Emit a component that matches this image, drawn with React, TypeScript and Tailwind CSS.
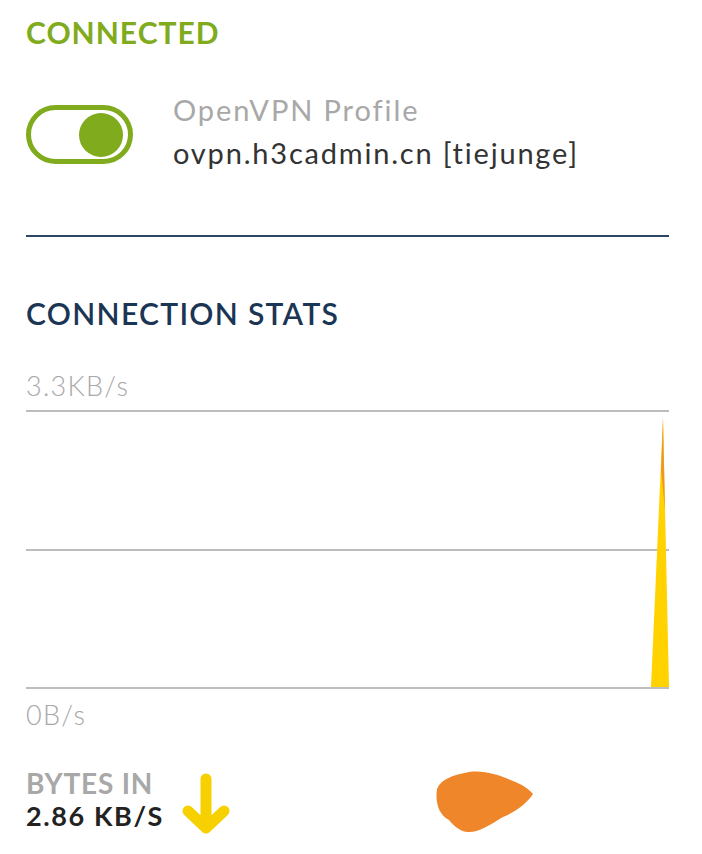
import React from "react";

export default function App() {
  const font = { fontFamily: "Lato, 'Open Sans', sans-serif" };
  return (
    <div className="w-[702px] h-[854px] bg-white overflow-hidden pl-[26px] pr-[33px]" style={font}>
      <div className="pt-[14px] text-[30px] leading-[36px] font-bold text-[#7fab1d] tracking-[1px]">CONNECTED</div>
      <div className="flex items-start mt-[55px]">
        <div className="w-[107px] h-[59px] rounded-full border-[5px] border-[#7fab1d] flex items-center justify-end pr-[5px] shrink-0">
          <div className="w-[44px] h-[44px] rounded-full bg-[#7fab1d]" />
        </div>
        <div className="ml-[40px] -mt-[17px]">
          <div className="text-[29px] leading-[44px] text-[#a8a8a8] tracking-[1.9px]">OpenVPN Profile</div>
          <div className="text-[29px] leading-[42px] text-[#333] tracking-[1.8px]">ovpn.h3cadmin.cn [tiejunge]</div>
        </div>
      </div>
      <div className="mt-[61px] h-[2px] bg-[#2b4763]" />
      <div className="mt-[58px] text-[30px] leading-[36px] font-semibold text-[#1b3554] tracking-[1.3px]">CONNECTION STATS</div>
      <div className="mt-[40px] text-[27px] leading-[30px] font-light text-[#a8a8a8] tracking-[1.3px]">3.3KB/s</div>
      <div className="relative mt-[9px] h-[279px] flex flex-col">
        <div className="h-[2px] bg-[#bdbdbd]" />
        <div className="flex-1" />
        <div className="h-[2px] bg-[#bdbdbd]" />
        <div className="flex-1" />
        <div className="h-[2px] bg-[#bdbdbd]" />
        <svg className="absolute left-0 top-0" width="643" height="279" viewBox="0 0 643 279">
          <polygon points="625,277 643,277 637,8" fill="#ffd200" />
          <polygon points="635,60 637,8 639,100" fill="#e98a2a" opacity="0.8" />
        </svg>
      </div>
      <div className="mt-[11px] text-[27px] leading-[30px] font-light text-[#a8a8a8] tracking-[1.3px]">0B/s</div>
      <div className="flex items-start mt-[37px]">
        <div className="w-[134px]">
          <div className="text-[28px] leading-[32px] font-bold text-[#a8a8a8] tracking-[0.8px]">BYTES IN</div>
          <div className="text-[27px] leading-[34px] font-bold text-[#222] tracking-[1.6px] whitespace-nowrap">2.86 KB/S</div>
        </div>
        <svg className="ml-[20px] mt-[6px]" width="52" height="62" viewBox="0 0 52 62">
          <path d="M26 6 L26 54 M8 38 L26 55 L44 38" stroke="#f7d000" strokeWidth="11" strokeLinecap="round" strokeLinejoin="round" fill="none" />
        </svg>
        <svg className="ml-[201px] mt-[0px]" width="104" height="70" viewBox="0 0 104 70">
          <path d="M4 22 C8 12 20 8 36 5 C52 3 66 8 80 14 C90 18 96 22 100 27 C94 36 84 44 70 50 C58 57 46 66 34 65 C26 64 20 58 16 53 C6 48 2 36 4 22 Z" fill="#f0862a" />
        </svg>
      </div>
    </div>
  );
}
